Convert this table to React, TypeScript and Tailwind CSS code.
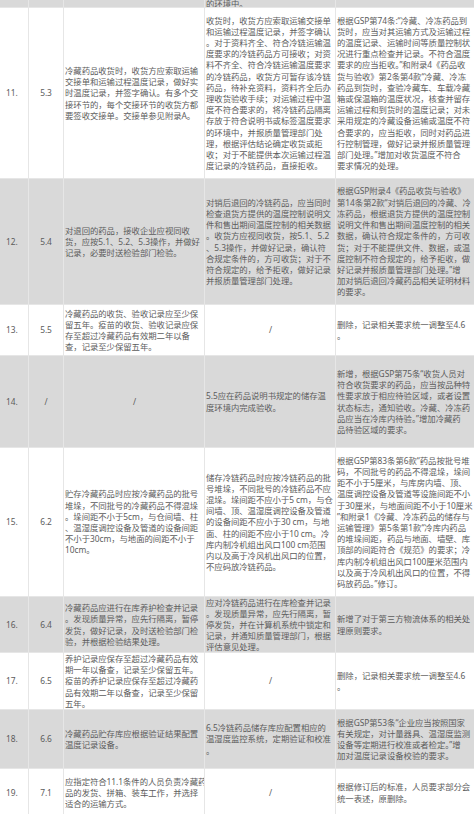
import React from 'react';

interface Row {
  no: string;
  sec: string;
  old: string[];
  rev: string[];
  note: string[];
  h: string;
  grey: boolean;
}

const rows: Row[] = [
  {
    no: '',
    sec: '',
    old: [],
    rev: ['的环境中。'],
    note: [],
    h: 'h-[8px] items-end',
    grey: true,
  },
  {
    no: '11.',
    sec: '5.3',
    old: [
      '冷藏药品收货时，收货方应索取运输',
      '交接单和运输过程温度记录，做好实',
      '时温度记录，并签字确认。有多个交',
      '接环节的，每个交接环节的收货方都',
      '要签收交接单。交接单参见附录A。',
    ],
    rev: [
      '收货时，收货方应索取运输交接单',
      '和运输过程温度记录，并签字确认',
      '。对于资料齐全、符合冷链运输温',
      '度要求的冷链药品方可接收；对资',
      '料不齐全、符合冷链运输温度要求',
      '的冷链药品，收货方可暂存该冷链',
      '药品，待补充资料，资料齐全后办',
      '理收货验收手续；对运输过程中温',
      '度不符合要求的，将冷链药品隔离',
      '存放于符合说明书或标签温度要求',
      '的环境中，并报质量管理部门处',
      '理，根据评估结论确定收货或拒',
      '收；对于不能提供本次运输过程温',
      '度记录的冷链药品，直接拒收。',
    ],
    note: [
      '根据GSP第74条:“冷藏、冷冻药品到',
      '货时，应当对其运输方式及运输过程',
      '的温度记录、运输时间等质量控制状',
      '况进行重点检查并记录。不符合温度',
      '要求的应当拒收。”和附录4《药品收',
      '货与验收》第2条第4款“冷藏、冷冻',
      '药品到货时，查验冷藏车、车载冷藏',
      '箱或保温箱的温度状况，核查并留存',
      '运输过程和到货时的温度记录；对未',
      '采用规定的冷藏设备运输或温度不符',
      '合要求的，应当拒收，同时对药品进',
      '行控制管理，做好记录并报质量管理',
      '部门处理。”增加对收货温度不符合',
      '要求情况的处理。',
    ],
    h: 'h-[171px] items-center',
    grey: false,
  },
  {
    no: '12.',
    sec: '5.4',
    old: [
      '对退回的药品，接收企业应视同收',
      '货，应按5.1、5.2、5.3操作，并做好',
      '记录，必要时送检验部门检验。',
    ],
    rev: [
      '对销后退回的冷链药品，应当同时',
      '检查退货方提供的温度控制说明文',
      '件和售出期间温度控制的相关数据',
      '。收货方应视同收货，按5.1、5.2',
      '、5.3操作，并做好记录，确认符',
      '合规定条件的，方可收货；对于不',
      '符合规定的，给予拒收，做好记录',
      '并报质量管理部门处理。',
    ],
    note: [
      '根据GSP附录4《药品收货与验收》',
      '第14条第2款“对销后退回的冷藏、冷',
      '冻药品，根据退货方提供的温度控制',
      '说明文件和售出期间温度控制的相关',
      '数据，确认符合规定条件的，方可收',
      '货；对于不能提供文件、数据，或温',
      '度控制不符合规定的，给予拒收，做',
      '好记录并报质量管理部门处理。”增',
      '加对销后退回冷藏药品相关证明材料',
      '的要求。',
    ],
    h: 'h-[126px] items-center',
    grey: true,
  },
  {
    no: '13.',
    sec: '5.5',
    old: [
      '冷藏药品的收货、验收记录应至少保',
      '留五年。疫苗的收货、验收记录应保',
      '存至超过冷藏药品有效期二年以备',
      '查，记录至少保留五年。',
    ],
    rev: ['/'],
    note: ['删除，记录相关要求统一调整至4.6', '。'],
    h: 'h-[51px] items-center',
    grey: false,
  },
  {
    no: '14.',
    sec: '/',
    old: ['/'],
    rev: ['5.5应在药品说明书规定的储存温', '度环境内完成验收。'],
    note: [
      '新增，根据GSP第75条“收货人员对',
      '符合收货要求的药品，应当按品种特',
      '性要求放于相应待验区域，或者设置',
      '状态标志，通知验收。冷藏、冷冻药',
      '品应当在冷库内待验。”增加冷藏药',
      '品待验区域的要求。',
    ],
    h: 'h-[92px] items-center',
    grey: true,
  },
  {
    no: '15.',
    sec: '6.2',
    old: [
      '贮存冷藏药品时应按冷藏药品的批号',
      '堆垛，不同批号的冷藏药品不得混垛',
      '。垛间距不小于5cm，与仓间墙、柱',
      '、温湿度调控设备及管道的设备间距',
      '不小于30cm，与地面的间距不小于',
      '10cm。',
    ],
    rev: [
      '储存冷链药品时应按冷链药品的批',
      '号堆垛，不同批号的冷链药品不应',
      '混垛。垛间距不应小于5 cm，与仓',
      '间墙、顶、温湿度调控设备及管道',
      '的设备间距不应小于30 cm，与地',
      '面、柱的间距不应小于10 cm。冷',
      '库内制冷机组出风口100 cm范围',
      '内以及高于冷风机出风口的位置，',
      '不应码放冷链药品。',
    ],
    note: [
      '根据GSP第83条第6款“药品按批号堆',
      '码，不同批号的药品不得混垛，垛间',
      '距不小于5厘米，与库房内墙、顶、',
      '温度调控设备及管道等设施间距不小',
      '于30厘米，与地面间距不小于10厘米',
      '”和附录1《冷藏、冷冻药品的储存与',
      '运输管理》第5条第1款“冷库内药品',
      '的堆垛间距，药品与地面、墙壁、库',
      '顶部的间距符合《规范》的要求；冷',
      '库内制冷机组出风口100厘米范围内',
      '以及高于冷风机出风口的位置，不得',
      '码放药品。”修订。',
    ],
    h: 'h-[149px] items-center',
    grey: false,
  },
  {
    no: '16.',
    sec: '6.4',
    old: [
      '冷藏药品应进行在库养护检查并记录',
      '。发现质量异常，应先行隔离，暂停',
      '发货，做好记录，及时送检验部门检',
      '验，并根据检验结果处理。',
    ],
    rev: [
      '应对冷链药品进行在库检查并记录',
      '。发现质量异常，应先行隔离，暂',
      '停发货，并在计算机系统中锁定和',
      '记录，并通知质量管理部门，根据',
      '评估意见处理。',
    ],
    note: ['新增了对于第三方物流体系的相关处', '理原则要求。'],
    h: 'h-[56px] items-center',
    grey: true,
  },
  {
    no: '17.',
    sec: '6.5',
    old: [
      '养护记录应保存至超过冷藏药品有效',
      '期一年以备查，记录至少保留五年。',
      '疫苗的养护记录应保存至超过冷藏药',
      '品有效期二年以备查，记录至少保留',
      '五年。',
    ],
    rev: ['/'],
    note: ['删除，记录相关要求统一调整至4.6', '。'],
    h: 'h-[57px] items-center',
    grey: false,
  },
  {
    no: '18.',
    sec: '6.6',
    old: ['冷藏药品贮存库应根据验证结果配置', '温度记录设备。'],
    rev: ['6.5冷链药品储存库应配置相应的', '温湿度监控系统，定期验证和校准', '。'],
    note: [
      '根据GSP第53条“企业应当按照国家',
      '有关规定，对计量器具、温湿度监测',
      '设备等定期进行校准或者检定。”增',
      '加对温度记录设备校验的要求。',
    ],
    h: 'h-[59px] items-center',
    grey: true,
  },
  {
    no: '19.',
    sec: '7.1',
    old: [
      '应指定符合11.1条件的人员负责冷藏药',
      '品的发货、拼箱、装车工作，并选择',
      '适合的运输方式。',
    ],
    rev: ['/'],
    note: ['根据修订后的标准，人员要求部分会', '统一表述，原删除。'],
    h: 'h-[48px] items-center',
    grey: false,
  },
];

function TextCell({ lines, last }: { lines: string[]; last?: boolean }) {
  const slash = lines.length === 1 && lines[0] === '/';
  return (
    <div
      className={`flex h-full items-center overflow-hidden pl-[1px] ${slash ? 'justify-center' : ''} ${
        last ? '' : 'border-r border-[#e6e6e6]'
      }`}
    >
      <div>
        {lines.map((line, i) => (
          <div key={i} className="whitespace-nowrap">
            {line}
          </div>
        ))}
      </div>
    </div>
  );
}

export default function App() {
  return (
    <div className="w-[474px] h-[814px] overflow-hidden bg-white font-['Noto_Sans','Noto_Sans_CJK_SC',sans-serif] text-[8.4px] leading-[11.2px] tracking-[-0.05px] text-[#5c5c5c]">
      {rows.map((row, index) => (
        <div
          key={index}
          className={`grid grid-cols-[29px_35px_141px_131px_138px] overflow-hidden border-b border-[#e6e6e6] ${row.h} ${
            row.grey ? 'bg-[#d9d9d9]' : 'bg-white'
          }`}
        >
          <div className="flex h-full items-center border-r border-[#e6e6e6] pl-[6px]">{row.no}</div>
          <div className="flex h-full items-center justify-center border-r border-[#e6e6e6]">{row.sec}</div>
          <TextCell lines={row.old} />
          <TextCell lines={row.rev} />
          <TextCell lines={row.note} last />
        </div>
      ))}
    </div>
  );
}
